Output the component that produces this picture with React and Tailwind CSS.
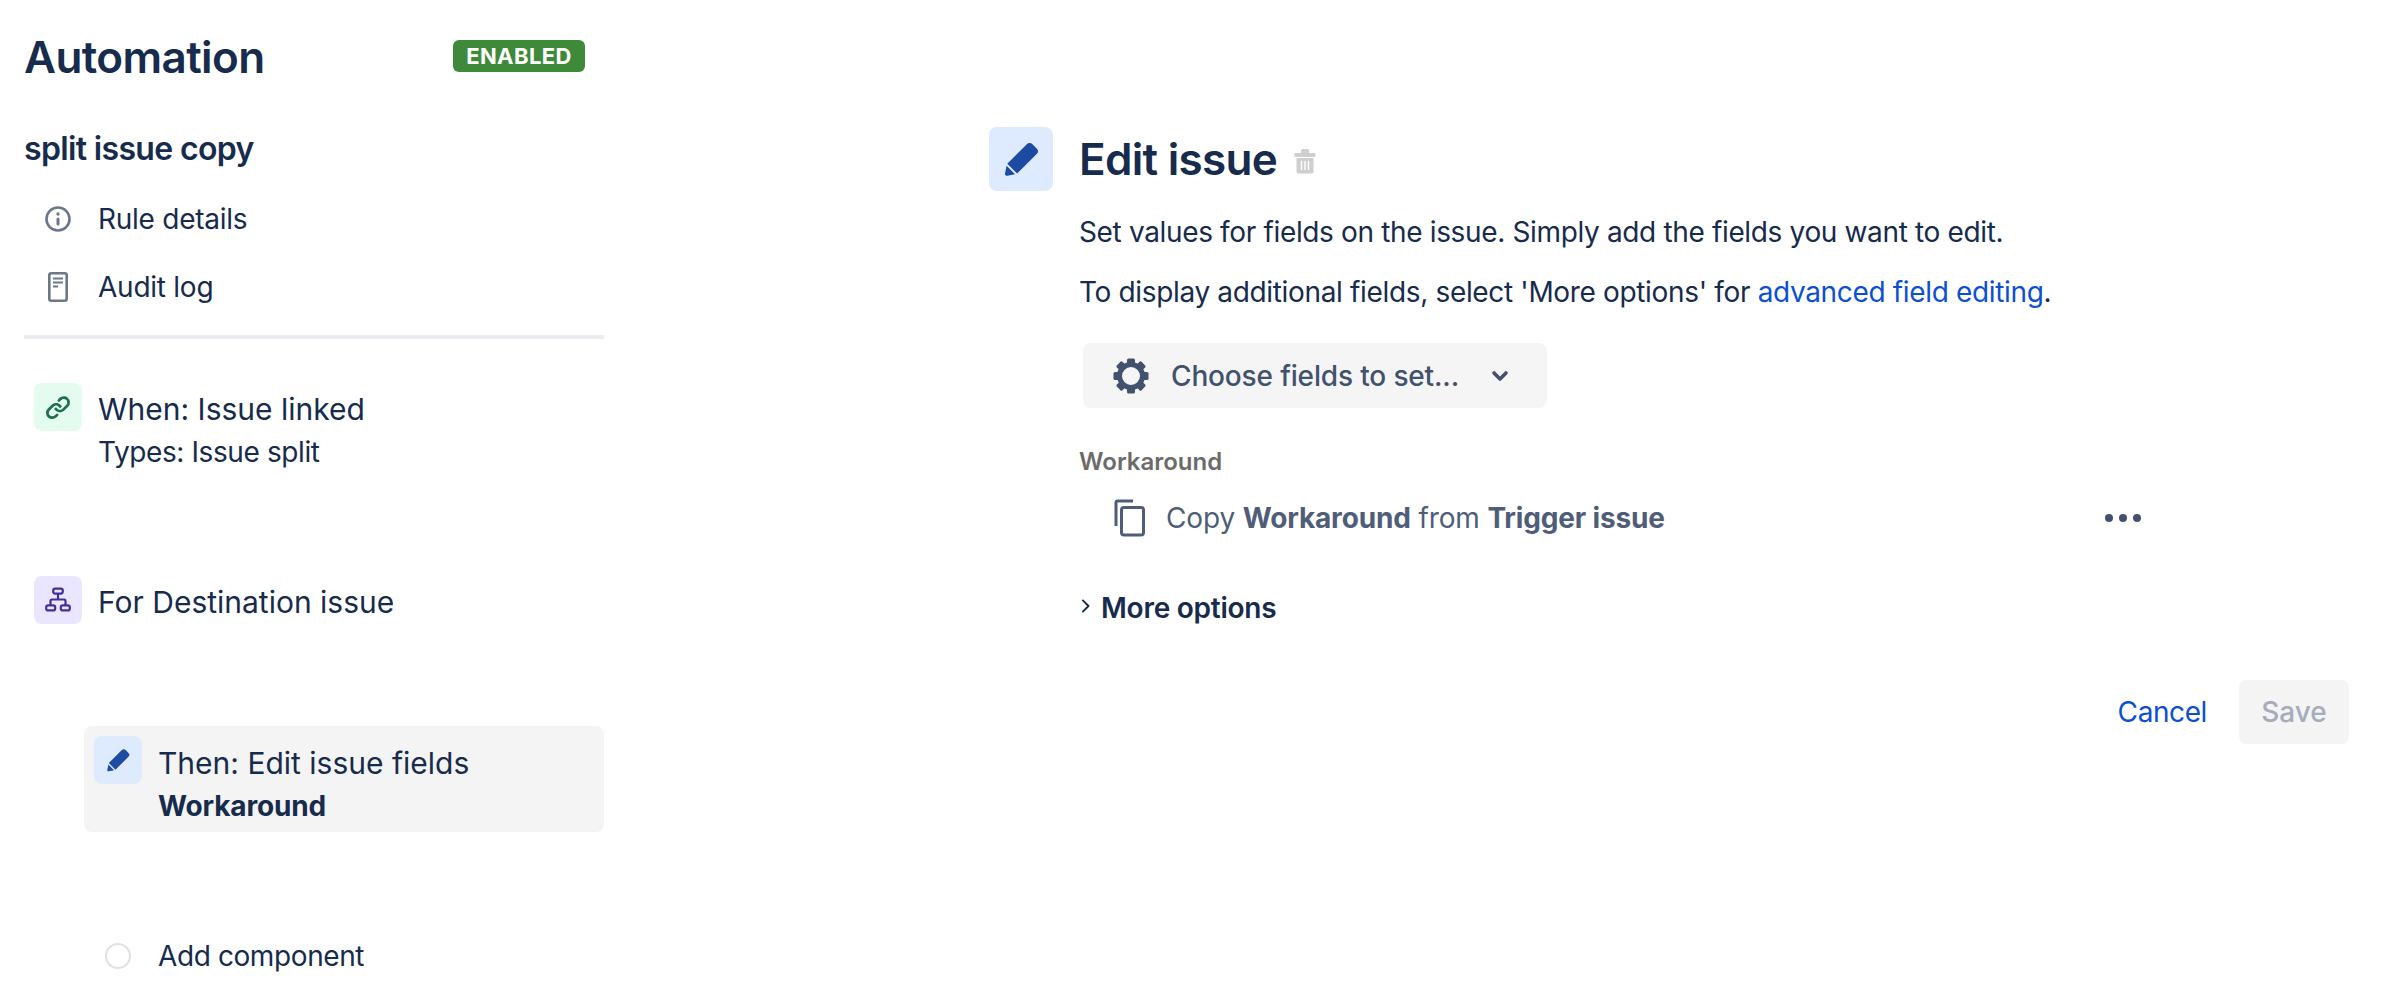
const font = { fontFamily: 'Inter, "Noto Sans", sans-serif' };

const PEN = 'M4.02 19.23a1 1 0 001.18 1.18l3.81-.78-4.21-4.21-.78 3.81zM19.844 6.707l-2.12-2.122A1.997 1.997 0 0016.308 4c-.512 0-1.024.195-1.415.585l-9.757 9.758 4.95 4.95 9.757-9.758a2 2 0 000-2.828z';

function PenIcon({ className }) {
  return (
    <svg viewBox="0 0 24 24" className={className} fill="#1d4aa3">
      <path d={PEN} />
    </svg>
  );
}

function InfoIcon() {
  return (
    <svg viewBox="0 0 28 28" className="w-7 h-7" fill="none">
      <circle cx="14" cy="14" r="11.5" stroke="#6b778c" strokeWidth="2.6" />
      <rect x="12.5" y="12.5" width="3" height="8" rx="1.5" fill="#6b778c" />
      <circle cx="14" cy="9" r="1.7" fill="#6b778c" />
    </svg>
  );
}

function LogIcon() {
  return (
    <svg viewBox="0 0 28 32" className="w-7 h-8" fill="none">
      <rect x="5.3" y="2.3" width="17.4" height="27.4" rx="2" stroke="#6b778c" strokeWidth="2.6" />
      <path d="M9 7.5h10M9 11.5h10M9 15.5h5" stroke="#6b778c" strokeWidth="2" />
    </svg>
  );
}

function LinkIcon() {
  return (
    <svg viewBox="0 0 24 24" className="w-8 h-8" fill="#216e4e">
      <path d="M12.856 5.457l-.937.92a1.002 1.002 0 000 1.437 1.047 1.047 0 001.463 0l.984-.966c.967-.95 2.542-1.135 3.602-.288a2.54 2.54 0 01.203 3.81l-2.903 2.852a2.646 2.646 0 01-3.696 0l-1.11-1.09L9 13.57l1.108 1.089c1.822 1.788 4.802 1.788 6.622 0l2.905-2.852a4.558 4.558 0 00-.357-6.82c-1.893-1.517-4.695-1.226-6.422.47" />
      <path d="M11.144 19.543l.937-.92a1.002 1.002 0 000-1.437 1.047 1.047 0 00-1.462 0l-.985.966c-.967.95-2.542 1.135-3.602.288a2.54 2.54 0 01-.203-3.81l2.903-2.852a2.646 2.646 0 013.696 0l1.11 1.09L15 11.43l-1.108-1.089c-1.822-1.788-4.802-1.788-6.622 0l-2.905 2.852a4.558 4.558 0 00.357 6.82c1.893 1.517 4.695 1.226 6.422-.47" />
    </svg>
  );
}

function TreeIcon() {
  return (
    <svg viewBox="0 0 26 26" className="w-[26px] h-[26px]" fill="none" stroke="#403294" strokeWidth="2.2">
      <rect x="8.2" y="1.6" width="9.6" height="5" rx="2" />
      <path d="M13 6.6v6M5.5 18v-4a1.5 1.5 0 011.5-1.5h12a1.5 1.5 0 011.5 1.5v4" />
      <rect x="1.2" y="18.4" width="9" height="5" rx="2" />
      <rect x="15.8" y="18.4" width="9" height="5" rx="2" />
    </svg>
  );
}

function TrashIcon() {
  return (
    <svg viewBox="0 0 24 28" className="w-6 h-7 mt-[3px]" fill="#cfcfcf">
      <rect x="1.5" y="6" width="21" height="4" rx="1" />
      <rect x="8" y="2" width="8" height="5" rx="1.5" />
      <path d="M3.5 11h17v13.5a2 2 0 01-2 2h-13a2 2 0 01-2-2z" />
      <path d="M8.5 14v9M12 14v9M15.5 14v9" stroke="#fff" strokeWidth="1.4" />
    </svg>
  );
}

function GearIcon() {
  const teeth = [0, 45, 90, 135, 180, 225, 270, 315];
  return (
    <svg viewBox="0 0 36 36" className="w-9 h-9" fill="#42526e">
      {teeth.map((a) => (
        <rect key={a} x="14" y="0.5" width="8" height="7" rx="1.5" transform={`rotate(${a} 18 18)`} />
      ))}
      <circle cx="18" cy="18" r="11.5" fill="none" stroke="#42526e" strokeWidth="5" />
    </svg>
  );
}

function CopyIcon() {
  return (
    <svg viewBox="0 0 32 38" className="w-8 h-[38px]" fill="none" stroke="#4f5d78" strokeWidth="3">
      <path d="M2 27V3.5A1.5 1.5 0 013.5 2H19" />
      <rect x="7.5" y="8.5" width="22" height="27.5" rx="2.5" />
    </svg>
  );
}

function Chevron({ className, d, stroke, width }) {
  return (
    <svg viewBox="0 0 16 16" className={className} fill="none" stroke={stroke} strokeWidth={width} strokeLinecap="round" strokeLinejoin="round">
      <path d={d} />
    </svg>
  );
}

function Tile({ bg, children }) {
  return <div className={`w-12 h-12 shrink-0 rounded-lg flex items-center justify-center ${bg}`}>{children}</div>;
}

function Sidebar() {
  return (
    <aside className="w-[580px] ml-6 shrink-0 text-[#172b4d]">
      <div className="flex items-center justify-between pr-[19px] pt-[28px] h-[86px]">
        <h1 className="text-[44px] leading-[58px] font-semibold tracking-[-0.6px]">Automation</h1>
        <span className="h-8 w-[132px] -mt-[3px] rounded-md bg-[#3f8a3a] text-white text-[22px] leading-8 font-bold text-center tracking-[0.4px]">ENABLED</span>
      </div>
      <h2 className="mt-[43px] text-[32px] leading-10 font-semibold tracking-[-0.65px]">split issue copy</h2>
      <div className="mt-[30px] flex items-center h-10 text-[28px] tracking-[-0.25px]">
        <div className="w-[74px] pl-5 flex"><InfoIcon /></div>
        Rule details
      </div>
      <div className="mt-[28px] flex items-center h-10 text-[28px] tracking-[-0.25px]">
        <div className="w-[74px] pl-5 flex"><LogIcon /></div>
        Audit log
      </div>
      <div className="mt-[28px] h-1 bg-[#ebecf0]" />

      <div className="mt-[44px] flex pl-[10px] gap-4">
        <Tile bg="bg-[#e3fcef]"><LinkIcon /></Tile>
        <div className="pt-px">
          <div className="text-[30px] leading-[50px]">When: Issue linked</div>
          <div className="text-[28px] leading-9 tracking-[-0.4px]">Types: Issue split</div>
        </div>
      </div>

      <div className="mt-[106px] flex items-start pl-[10px] gap-4">
        <Tile bg="bg-[#eae6ff]"><TreeIcon /></Tile>
        <div className="mt-px text-[30px] leading-[50px]">For Destination issue</div>
      </div>

      <div className="mt-[99px] ml-[60px] h-[106px] rounded-lg bg-[#f4f4f4] flex gap-4 p-[10px]">
        <Tile bg="bg-[#deebff]"><PenIcon className="w-8 h-8" /></Tile>
        <div className="pt-[2px]">
          <div className="text-[30px] leading-[50px]">Then: Edit issue fields</div>
          <div className="text-[28px] leading-9 font-bold tracking-[-0.15px]">Workaround</div>
        </div>
      </div>

      <div className="mt-[106px] ml-[60px] flex items-center pl-[21px] gap-[27px]">
        <div className="w-[26px] h-[26px] rounded-full border-2 border-[#dfe1e6]" />
        <div className="text-[28px] leading-9 tracking-[-0.4px]">Add component</div>
      </div>
    </aside>
  );
}

function Editor() {
  return (
    <main className="flex-1 ml-[385px] mr-[51px] pt-[127px] flex gap-[26px] text-[#172b4d]">
      <div className="w-16 h-16 shrink-0 rounded-lg bg-[#deebff] flex items-center justify-center">
        <PenIcon className="w-12 h-12" />
      </div>
      <div className="flex-1">
        <div className="flex items-center gap-4 h-16">
          <h2 className="text-[44px] font-semibold leading-[64px] tracking-[-0.7px]">Edit issue</h2>
          <TrashIcon />
        </div>
        <p className="mt-[21px] text-[28px] leading-10 tracking-[-0.35px]">Set values for fields on the issue. Simply add the fields you want to edit.</p>
        <p className="mt-5 text-[28px] leading-10 tracking-[-0.34px]">
          To display additional fields, select 'More options' for <span className="text-[#0c4fd1]">advanced field editing</span>.
        </p>
        <button className="mt-[31px] ml-1 w-[464px] h-[65px] rounded-lg bg-[#f5f5f5] flex items-center pl-[30px] text-[#42526e] text-[28px] font-medium tracking-[-0.15px]">
          <GearIcon />
          <span className="ml-[22px]">Choose fields to set...</span>
          <Chevron className="w-6 h-6 ml-[29px]" d="M4 6l4 4 4-4" stroke="#42526e" width="2.4" />
        </button>
        <div className="mt-[38px] text-[24px] leading-8 font-semibold text-[#6b6b6b]">Workaround</div>
        <div className="mt-[20px] flex items-center h-10 text-[#4f5d78] text-[28px] tracking-[-0.15px]">
          <div className="ml-[35px] flex"><CopyIcon /></div>
          <span className="ml-[20px]">Copy <b className="font-bold">Workaround</b> from <b className="font-bold">Trigger issue</b></span>
          <div className="ml-auto mr-[208px] flex gap-[6px]">
            <span className="w-2 h-2 rounded-full bg-[#42526e]" />
            <span className="w-2 h-2 rounded-full bg-[#42526e]" />
            <span className="w-2 h-2 rounded-full bg-[#42526e]" />
          </div>
        </div>
        <div className="mt-[50px] flex items-center h-10">
          <Chevron className="w-5 h-5 -mt-1 -ml-[3px]" d="M5.5 3.5L10 8l-4.5 4.5" stroke="#172b4d" width="1.5" />
          <span className="ml-[5px] text-[28px] font-semibold tracking-[-0.25px]">More options</span>
        </div>
        <div className="mt-[52px] flex items-center justify-end gap-8">
          <span className="text-[28px] text-[#0c4fd1] tracking-[-0.4px]">Cancel</span>
          <span className="w-[110px] h-16 rounded-lg bg-[#f4f4f4] text-[#a5adba] text-[28px] font-medium flex items-center justify-center">Save</span>
        </div>
      </div>
    </main>
  );
}

export default function App() {
  return (
    <div style={font} className="w-[2400px] h-[992px] bg-white overflow-hidden flex">
      <Sidebar />
      <Editor />
    </div>
  );
}
